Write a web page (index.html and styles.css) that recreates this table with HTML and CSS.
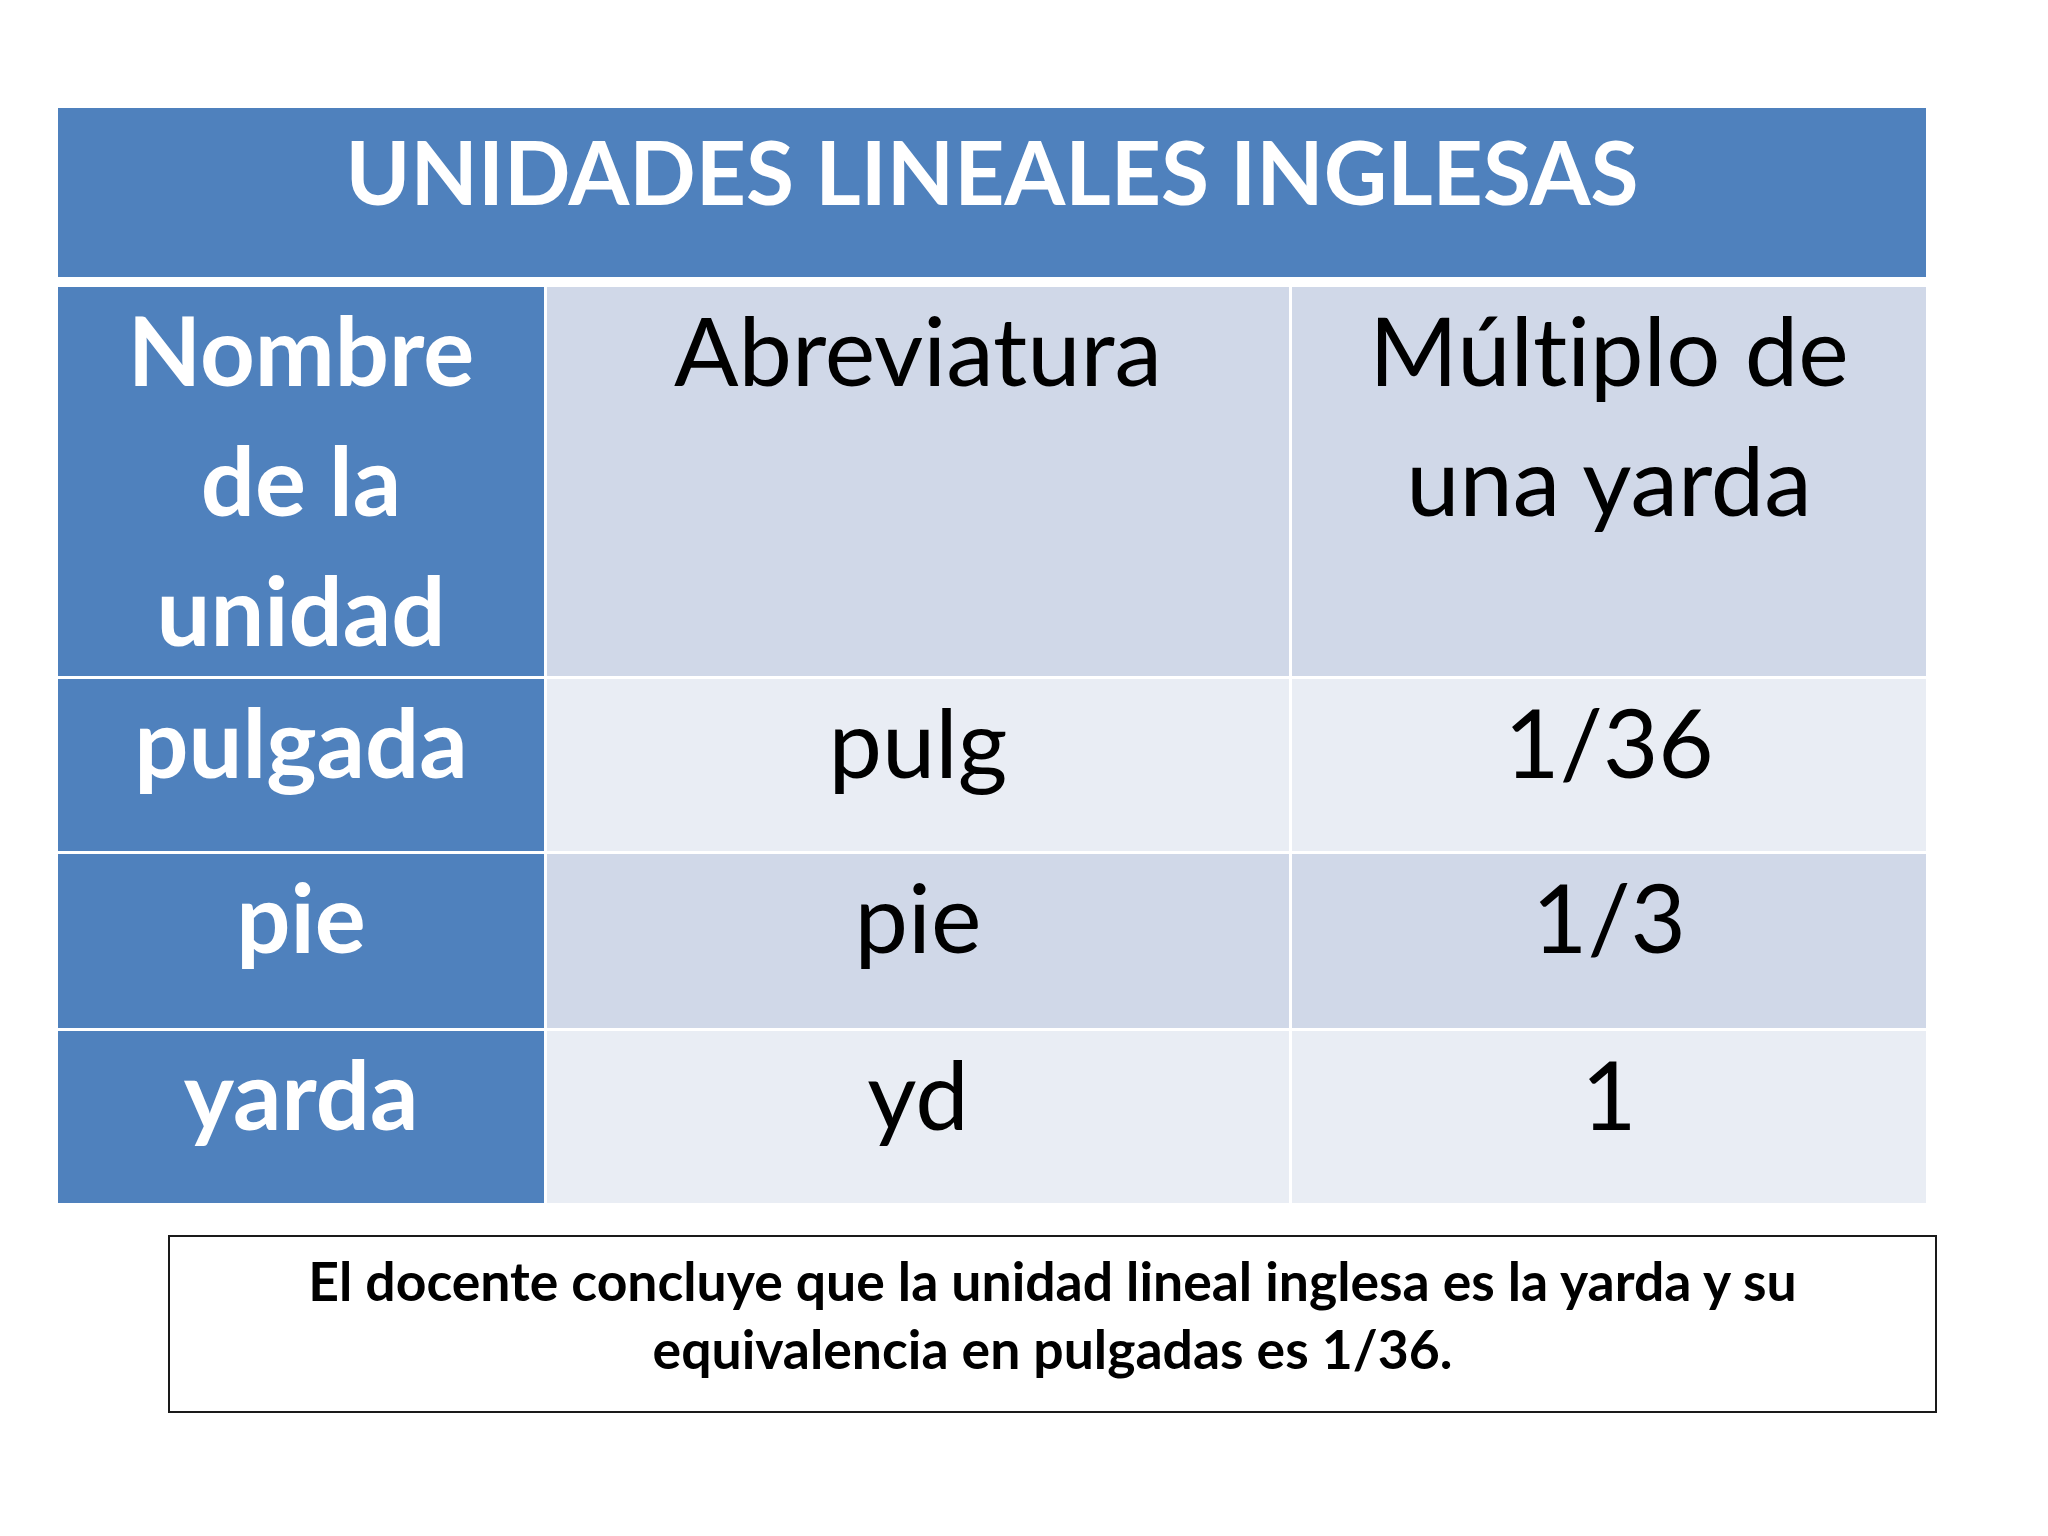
FILE: index.html
```html
<!DOCTYPE html>
<html lang="es">
<head>
<meta charset="utf-8">
<title>Unidades lineales inglesas</title>
<link rel="stylesheet" href="styles.css">
</head>
<body>
<main class="slide">
  <section class="units">
    <h1 class="units-title">UNIDADES LINEALES INGLESAS</h1>
    <div class="units-grid">
      <div class="cell name"><span class="cell-text">Nombre de la unidad</span></div>
      <div class="cell band-dark"><span class="cell-text">Abreviatura</span></div>
      <div class="cell band-dark"><span class="cell-text">Múltiplo de una yarda</span></div>

      <div class="cell name"><span class="cell-text">pulgada</span></div>
      <div class="cell band-light"><span class="cell-text">pulg</span></div>
      <div class="cell band-light"><span class="cell-text">1/36</span></div>

      <div class="cell name"><span class="cell-text">pie</span></div>
      <div class="cell band-dark"><span class="cell-text">pie</span></div>
      <div class="cell band-dark"><span class="cell-text">1/3</span></div>

      <div class="cell name"><span class="cell-text">yarda</span></div>
      <div class="cell band-light"><span class="cell-text">yd</span></div>
      <div class="cell band-light"><span class="cell-text">1</span></div>
    </div>
  </section>
  <p class="conclusion">El docente concluye que la unidad lineal inglesa es la yarda y su<br>equivalencia en pulgadas es 1/36.</p>
</main>
</body>
</html>
```

FILE: styles.css
```css
html, body {
  margin: 0;
  padding: 0;
  background: #ffffff;
}

body {
  width: 2048px;
  height: 1536px;
  overflow: hidden;
  font-family: Lato, "Open Sans", sans-serif;
  font-variant-ligatures: none;
  font-feature-settings: "liga" 0, "clig" 0;
}

.slide {
  padding-top: 108px;
  padding-left: 58px;
  display: flex;
  flex-direction: column;
}

.units {
  width: 1868px;
  display: flex;
  flex-direction: column;
  gap: 10px;
}

.units-title {
  margin: 0;
  height: 169px;
  box-sizing: border-box;
  padding-top: 11px;
  background: #4f81bd;
  color: #ffffff;
  font-size: 87.5px;
  font-weight: 700;
  line-height: 1.2;
  text-align: center;
}

.units-grid {
  display: grid;
  grid-template-columns: 486px 742px 634px;
  grid-template-rows: 389px 172px 174px 172px;
  gap: 3px;
  background: #ffffff;
}

.cell {
  font-size: 95.5px;
  line-height: 130px;
  text-align: center;
  color: #000000;
  padding: 0 16px;
  overflow: hidden;
}

.cell-text {
  display: block;
  margin-top: -3px;
}

.name {
  background: #4f81bd;
  color: #ffffff;
  font-weight: 700;
}

.band-dark {
  background: #d0d8e8;
}

.band-light {
  background: #e9edf4;
}

.conclusion {
  margin: 32px 0 0 110px;
  width: 1769px;
  height: 178px;
  box-sizing: border-box;
  border: 2px solid #1a1a1a;
  padding-top: 9px;
  font-size: 53.5px;
  font-weight: 700;
  line-height: 68px;
  text-align: center;
  color: #000000;
}
```
